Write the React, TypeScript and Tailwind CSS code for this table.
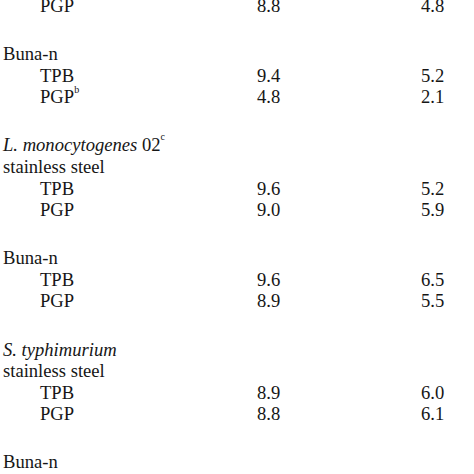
type Row = { label: React.ReactNode; a?: string; b?: string; indent?: boolean }

const groups: Row[][] = [
  [{ label: 'PGP', a: '8.8', b: '4.8', indent: true }],
  [
    { label: 'Buna-n' },
    { label: 'TPB', a: '9.4', b: '5.2', indent: true },
    {
      label: (
        <>
          PGP<sup className="text-[10px] align-[5px]">b</sup>
        </>
      ),
      a: '4.8',
      b: '2.1',
      indent: true,
    },
  ],
  [
    {
      label: (
        <>
          <i>L. monocytogenes</i> 02<sup className="text-[10px] align-[6px]">c</sup>
        </>
      ),
    },
    { label: 'stainless steel' },
    { label: 'TPB', a: '9.6', b: '5.2', indent: true },
    { label: 'PGP', a: '9.0', b: '5.9', indent: true },
  ],
  [
    { label: 'Buna-n' },
    { label: 'TPB', a: '9.6', b: '6.5', indent: true },
    { label: 'PGP', a: '8.9', b: '5.5', indent: true },
  ],
  [
    { label: <i>S. typhimurium</i> },
    { label: 'stainless steel' },
    { label: 'TPB', a: '8.9', b: '6.0', indent: true },
    { label: 'PGP', a: '8.8', b: '6.1', indent: true },
  ],
  [{ label: 'Buna-n' }],
]

export default function App() {
  return (
    <div
      className="w-[474px] h-[474px] overflow-hidden bg-white text-[#161616] text-[18.6px] leading-[21.6px]"
      style={{ fontFamily: '"Liberation Serif", "Times New Roman", serif' }}
    >
      <div className="-mt-[5px] flex flex-col gap-[26.5px]">
        {groups.map((rows, gi) => (
          <div key={gi} className="flex flex-col">
            {rows.map((r, ri) => (
              <div key={ri} className="grid grid-cols-[257px_164px_1fr] h-[21.6px] whitespace-nowrap">
                <div className={r.indent ? 'pl-[40px]' : 'pl-[3px]'}>{r.label}</div>
                <div>{r.a}</div>
                <div>{r.b}</div>
              </div>
            ))}
          </div>
        ))}
      </div>
    </div>
  )
}
